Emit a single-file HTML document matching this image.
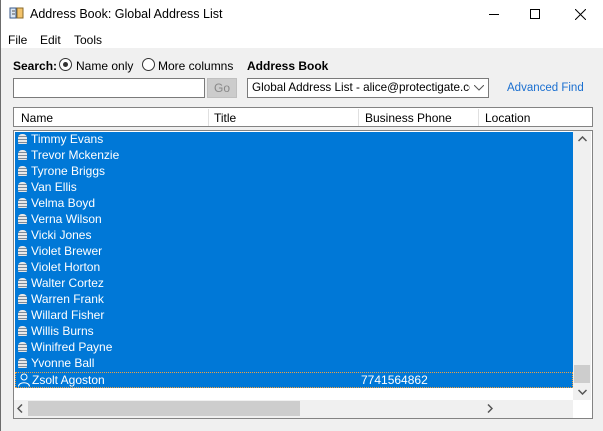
<!DOCTYPE html>
<html><head><style>
*{margin:0;padding:0;box-sizing:border-box}
body{width:603px;height:431px;background:#f0f0f0;font-family:"Liberation Sans",sans-serif;font-size:12px;color:#000;position:relative;overflow:hidden}
.a{position:absolute}
.row{position:absolute;left:15px;width:558px;height:16px;color:#fff;line-height:16px;padding-left:16px}
.ic{position:absolute;left:3px;top:3px;width:9px;height:10px;border-radius:4px 4px 1px 1px;background:repeating-linear-gradient(#e8e8e8 0 2px,#7a8a9a 2px 3px)}
</style></head><body>
<div class="a" style="left:0;top:0;width:603px;height:48px;background:#fff"></div>
<div class="a" style="left:0;top:0;width:1px;height:431px;background:#6c6c6c"></div>
<svg class="a" style="left:9px;top:6px" width="16" height="14"><rect x="1" y="2" width="6" height="10" fill="#dbe6f2" stroke="#3a5a8a"/><rect x="8" y="2" width="6" height="10" fill="#f3c36b" stroke="#8a6a2a"/><line x1="3" y1="5" x2="6" y2="5" stroke="#555"/><line x1="3" y1="8" x2="6" y2="8" stroke="#555"/></svg>
<div class="a" style="left:30px;top:7px;font-size:12.5px">Address Book: Global Address List</div>
<div class="a" style="left:489px;top:14px;width:10px;height:1px;background:#000"></div>
<div class="a" style="left:530px;top:9px;width:10px;height:10px;border:1px solid #000"></div>
<svg class="a" style="left:575px;top:9px" width="11" height="11"><path d="M0 0L11 11M11 0L0 11" stroke="#000"/></svg>
<div class="a" style="left:8px;top:33px">File</div>
<div class="a" style="left:40px;top:33px">Edit</div>
<div class="a" style="left:74px;top:33px">Tools</div>
<div class="a" style="left:13px;top:59px;font-weight:bold">Search:</div>
<div class="a" style="left:59px;top:58px;width:13px;height:13px;border:1px solid #333;border-radius:50%;background:#fff"><div class="a" style="left:3px;top:3px;width:5px;height:5px;border-radius:50%;background:#333"></div></div>
<div class="a" style="left:76px;top:59px">Name only</div>
<div class="a" style="left:142px;top:58px;width:13px;height:13px;border:1px solid #333;border-radius:50%;background:#fff"></div>
<div class="a" style="left:158px;top:59px">More columns</div>
<div class="a" style="left:247px;top:59px;font-weight:bold">Address Book</div>
<div class="a" style="left:13px;top:78px;width:192px;height:20px;background:#fff;border:1px solid #7a7a7a"></div>
<div class="a" style="left:207px;top:78px;width:30px;height:20px;background:#ccc;border:1px solid #bfbfbf;color:#888;text-align:center;line-height:18px">Go</div>
<div class="a" style="left:247px;top:78px;width:242px;height:20px;background:#fff;border:1px solid #7a7a7a"></div>
<div class="a" style="left:252px;top:79px;width:218px;height:18px;line-height:18px;white-space:nowrap;overflow:hidden;font-size:11.7px">Global Address List - alice@protectigate.cc</div>
<svg class="a" style="left:474px;top:85px" width="10" height="6"><path d="M0 0L5 5L10 0" stroke="#555" fill="none"/></svg>
<div class="a" style="left:507px;top:82px;color:#1a6fd0;font-size:11.5px">Advanced Find</div>
<div class="a" style="left:13px;top:107px;width:580px;height:20px;background:#fff;border:1px solid #838383"></div>
<div class="a" style="left:21px;top:111px">Name</div>
<div class="a" style="left:208px;top:109px;width:1px;height:17px;background:#e0e0e0"></div>
<div class="a" style="left:214px;top:111px">Title</div>
<div class="a" style="left:358px;top:109px;width:1px;height:17px;background:#e0e0e0"></div>
<div class="a" style="left:365px;top:111px">Business Phone</div>
<div class="a" style="left:478px;top:109px;width:1px;height:17px;background:#e0e0e0"></div>
<div class="a" style="left:485px;top:111px">Location</div>
<div class="a" style="left:13px;top:130px;width:580px;height:289px;background:#fff;border:1px solid #838383"></div>
<div class="a" style="left:15px;top:132px;width:558px;height:256px;background:#0078d7"></div>
<div class="row" style="top:131px"><i class="ic"></i>Timmy Evans</div>
<div class="row" style="top:147px"><i class="ic"></i>Trevor Mckenzie</div>
<div class="row" style="top:163px"><i class="ic"></i>Tyrone Briggs</div>
<div class="row" style="top:179px"><i class="ic"></i>Van Ellis</div>
<div class="row" style="top:195px"><i class="ic"></i>Velma Boyd</div>
<div class="row" style="top:211px"><i class="ic"></i>Verna Wilson</div>
<div class="row" style="top:227px"><i class="ic"></i>Vicki Jones</div>
<div class="row" style="top:243px"><i class="ic"></i>Violet Brewer</div>
<div class="row" style="top:259px"><i class="ic"></i>Violet Horton</div>
<div class="row" style="top:275px"><i class="ic"></i>Walter Cortez</div>
<div class="row" style="top:291px"><i class="ic"></i>Warren Frank</div>
<div class="row" style="top:307px"><i class="ic"></i>Willard Fisher</div>
<div class="row" style="top:323px"><i class="ic"></i>Willis Burns</div>
<div class="row" style="top:339px"><i class="ic"></i>Winifred Payne</div>
<div class="row" style="top:355px"><i class="ic"></i>Yvonne Ball</div>
<div class="row" style="top:372px;border:1px dotted #f0a040;line-height:14px;overflow:hidden">
<svg class="a" style="left:2px;top:0px" width="12" height="14"><circle cx="6" cy="4" r="3" fill="none" stroke="#fff"/><path d="M0.5 13.5C0.5 8.5 11.5 8.5 11.5 13.5" fill="none" stroke="#fff"/></svg>Zsolt Agoston<span class="a" style="left:345px">7741564862</span></div>
<div class="a" style="left:573px;top:131px;width:18px;height:269px;background:#f0f0f0"></div>
<svg class="a" style="left:578px;top:136px" width="9" height="6"><path d="M0.5 5L4.5 1L8.5 5" stroke="#555" stroke-width="1.5" fill="none"/></svg>
<div class="a" style="left:574px;top:365px;width:16px;height:18px;background:#cdcdcd"></div>
<svg class="a" style="left:578px;top:389px" width="9" height="6"><path d="M0.5 1L4.5 5L8.5 1" stroke="#555" stroke-width="1.5" fill="none"/></svg>
<div class="a" style="left:14px;top:400px;width:559px;height:18px;background:#f0f0f0"></div>
<div class="a" style="left:28px;top:401px;width:272px;height:15px;background:#cdcdcd"></div>
<svg class="a" style="left:17px;top:404px" width="6" height="9"><path d="M5 0.5L1 4.5L5 8.5" stroke="#555" stroke-width="1.5" fill="none"/></svg>
<svg class="a" style="left:487px;top:404px" width="6" height="9"><path d="M1 0.5L5 4.5L1 8.5" stroke="#555" stroke-width="1.5" fill="none"/></svg>
</body></html>
